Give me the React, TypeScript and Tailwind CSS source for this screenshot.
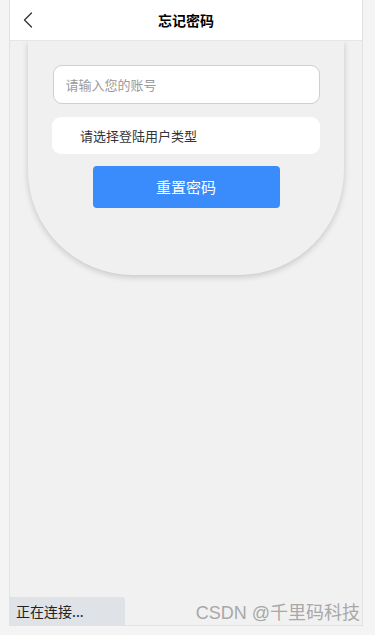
import { ChevronLeft } from 'lucide-react';

const font = { fontFamily: '"Microsoft YaHei", "Noto Sans CJK SC", "Liberation Sans", sans-serif' };

export default function App() {
  return (
    <div className="relative h-[635px] w-[375px] overflow-hidden bg-[#f4f4f4]" style={font}>
      {/* phone frame */}
      <div className="relative ml-[9px] h-[626px] w-[354px] border-x border-b border-[#e2e2e2] bg-[#f1f1f1]">
        {/* header */}
        <div className="relative z-10 flex h-[41px] items-center border-b border-[#e6e6e6] bg-white">
          <ChevronLeft className="ml-[4px] h-[28px] w-[28px] text-[#333]" strokeWidth={1.1} />
          <h1 className="absolute left-0 right-0 text-center text-[14px] font-bold text-black">忘记密码</h1>
        </div>

        {/* card */}
        <div className="mx-[18px] flex h-[234px] flex-col items-center rounded-b-[105px] bg-[#f0f0f0] pt-[24px] shadow-[0_2px_6px_rgba(0,0,0,0.18)]">
          <input
            className="h-[39px] w-[267px] rounded-[9px] border border-[#cfcfcf] bg-white px-[12px] text-[13px] text-[#333] outline-none placeholder:text-[#9a9a9a]"
            placeholder="请输入您的账号"
          />
          <div className="mt-[13px] flex h-[37px] w-[268px] items-center rounded-[9px] bg-white pl-[28px] text-[13px] text-[#333]">
            请选择登陆用户类型
          </div>
          <button className="mt-[12px] h-[42px] w-[187px] rounded-[4px] bg-[#3a8bfb] text-[15px] text-white">
            重置密码
          </button>
        </div>

        {/* status overlay */}
        <div className="absolute bottom-0 left-0 flex h-[28px] w-[115px] items-center rounded-tr-[3px] bg-[#dfe2e7] pl-[6px] text-[14px] text-[#222]">
          正在连接...
        </div>
      </div>

      {/* watermark */}
      <div className="absolute right-[15px] top-[602px] text-[18px] leading-[22px] text-[#a8a8a8] font-['Liberation_Sans','Noto_Sans_CJK_SC',sans-serif]">
        CSDN @千里码科技
      </div>
    </div>
  );
}
